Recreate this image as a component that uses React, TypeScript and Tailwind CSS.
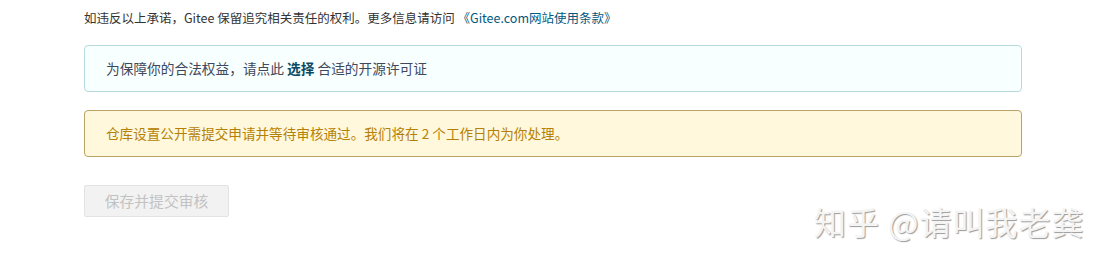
export default function App() {
  return (
    <div className="relative h-[269px] w-[1113px] overflow-hidden bg-white font-['Noto_Sans_CJK_SC',sans-serif]">
      <div className="ml-[84px] w-[938px] pt-[9px]">
        <p className="text-[12.5px] leading-[18px] text-[#333]">
          如违反以上承诺，Gitee 保留追究相关责任的权利。更多信息请访问{" "}
          <a className="text-[#005980]">《Gitee.com网站使用条款》</a>
        </p>

        <div className="mt-[18px] flex h-[47px] items-center rounded-[4px] border border-[#b7dadf] bg-[#f8ffff] px-[21px] text-[13.7px] text-[#40485b]">
          为保障你的合法权益，请点此&nbsp;
          <span className="font-bold text-[#0c4a63]">选择</span>
          &nbsp;合适的开源许可证
        </div>

        <div className="mt-[18px] flex h-[47px] items-center rounded-[4px] border border-[#b8a266] bg-[#fff8dc] px-[21px] text-[13.6px] text-[#b58105]">
          仓库设置公开需提交申请并等待审核通过。我们将在 2 个工作日内为你处理。
        </div>

        <button
          disabled
          className="mt-[28px] h-[32px] w-[145px] rounded-[2px] border border-[#e3e3e3] bg-[#f2f2f2] text-[14.8px] text-[#c2c2c2]"
        >
          保存并提交审核
        </button>
      </div>

      <div className="absolute left-[814px] top-[199px] text-[32px] leading-[44px] tracking-[1px] text-[#f4f4f4] [text-shadow:1px_1px_1px_#9a9a9a]">
        知乎 @请叫我老龚
      </div>
    </div>
  );
}
